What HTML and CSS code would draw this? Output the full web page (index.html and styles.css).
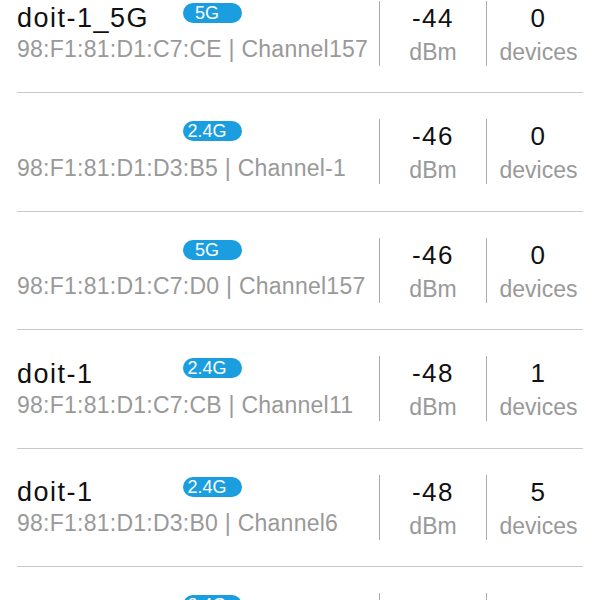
FILE: index.html
```html
<!DOCTYPE html>
<html lang="en">
<head>
  <meta charset="UTF-8">
  <meta name="viewport" content="width=device-width, initial-scale=1.0">
  <title>WiFi Scan</title>
  <link rel="stylesheet" href="styles.css">
</head>
<body>
  <div class="ap-list" id="ap-list"></div>

  <script>
    const aps = [
      { ssid: "doit-1_5G", band: "5G", mac: "98:F1:81:D1:C7:CE", channel: "157", rssi: -44, devices: 0 },
      { ssid: "", band: "2.4G", mac: "98:F1:81:D1:D3:B5", channel: "-1", rssi: -46, devices: 0 },
      { ssid: "", band: "5G", mac: "98:F1:81:D1:C7:D0", channel: "157", rssi: -46, devices: 0 },
      { ssid: "doit-1", band: "2.4G", mac: "98:F1:81:D1:C7:CB", channel: "11", rssi: -48, devices: 1 },
      { ssid: "doit-1", band: "2.4G", mac: "98:F1:81:D1:D3:B0", channel: "6", rssi: -48, devices: 5 },
      { ssid: "", band: "2.4G", mac: "98:F1:81:D1:D3:B1", channel: "6", rssi: -49, devices: 0 },
    ];

    function renderList() {
      const list = document.getElementById("ap-list");
      list.innerHTML = aps
        .map((ap) => `
          <div class="ap">
            <div class="info">
              <div class="name-line">
                <span class="ssid">${ap.ssid}</span>
                <span class="band">${ap.band}</span>
              </div>
              <div class="mac">${ap.mac} | Channel${ap.channel}</div>
            </div>
            <div class="stat">
              <div class="num">${ap.rssi}</div>
              <div class="unit">dBm</div>
            </div>
            <div class="stat devices">
              <div class="num">${ap.devices}</div>
              <div class="unit">devices</div>
            </div>
          </div>
        `)
        .join("");
    }

    renderList();
  </script>
</body>
</html>
```

FILE: styles.css
```css
body {
  font-family: "Liberation Sans", Arial, sans-serif;
  background: #fff;
  margin: 0;
  padding: 0;
  overflow: hidden;
}
.ap-list {
  margin-top: -25.5px;
}
.ap {
  display: flex;
  align-items: center;
  height: 118.5px;
  box-sizing: border-box;
  margin: 0 17px;
  border-bottom: 1px solid #c9c9c9;
}
.info {
  flex: 1;
}
.name-line {
  display: flex;
  height: 32px;
}
.ssid {
  width: 166px;
  font-size: 27px;
  line-height: 32px;
  letter-spacing: 1.5px;
  color: #111;
}
.band {
  width: 59px;
  height: 20px;
  margin-top: 0.5px;
  box-sizing: border-box;
  padding-right: 11px;
  border-radius: 10px;
  background: #1a9ee0;
  color: #fff;
  font-size: 18px;
  line-height: 20px;
  text-align: center;
}
.mac {
  font-size: 23px;
  line-height: 30px;
  letter-spacing: 0.25px;
  color: #999;
  white-space: nowrap;
}
.stat {
  width: 107px;
  height: 65px;
  box-sizing: border-box;
  border-left: 1px solid #aaa;
  display: flex;
  flex-direction: column;
  align-items: center;
}
.stat.devices {
  width: 104px;
  margin-right: -7px;
}
.num {
  margin-top: 3px;
  font-size: 26px;
  line-height: 28px;
  letter-spacing: 1.5px;
  color: #111;
}
.unit {
  margin-top: 5px;
  font-size: 23px;
  line-height: 30px;
  color: #999;
}
```
